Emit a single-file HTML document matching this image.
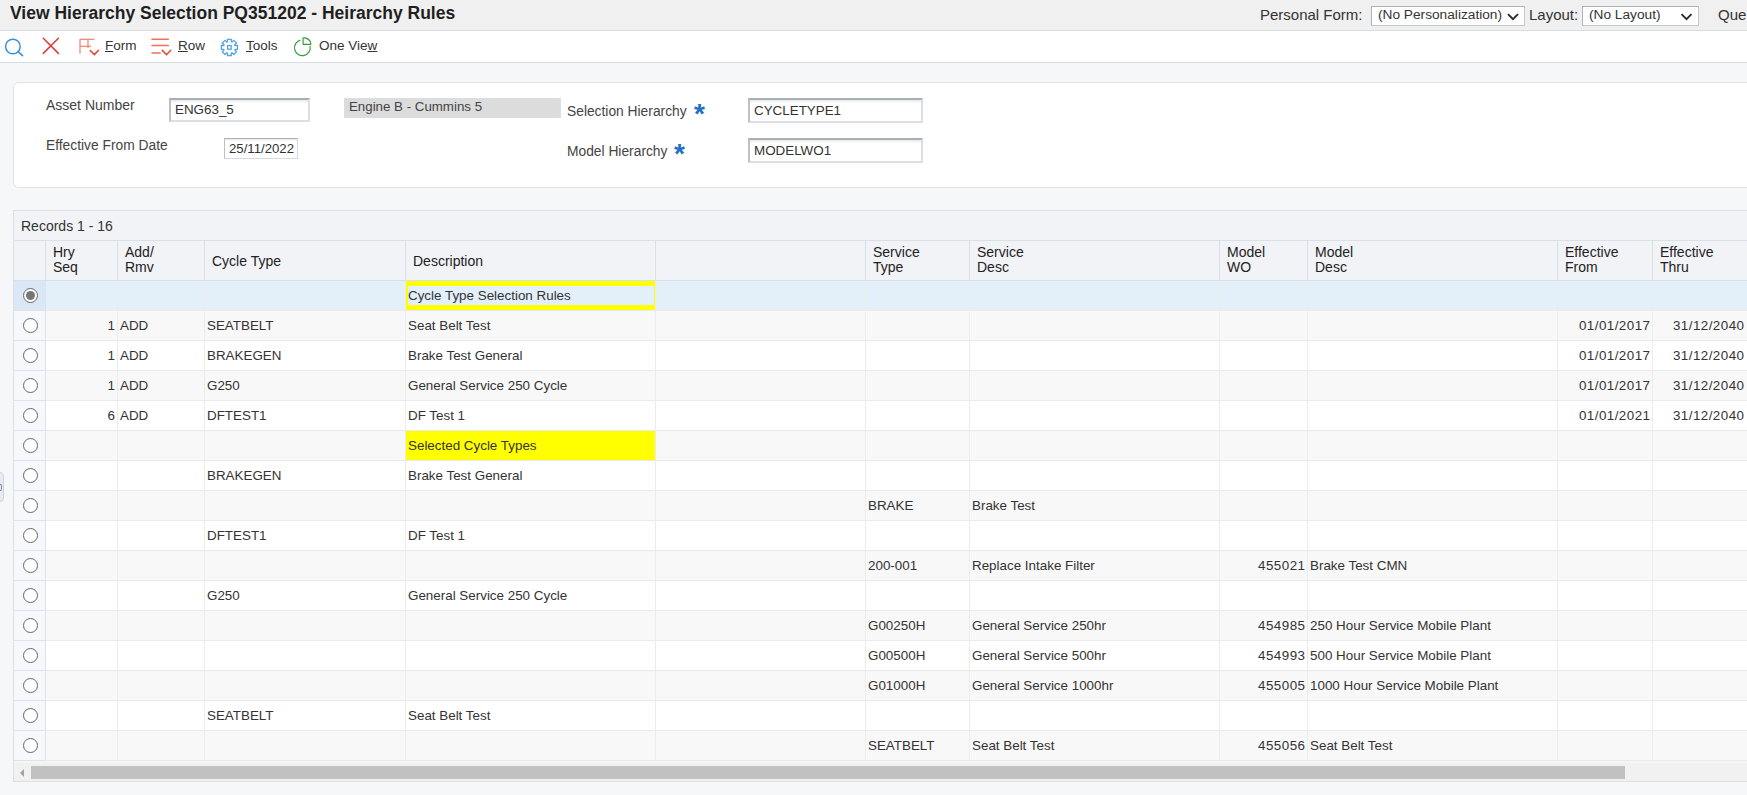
<!DOCTYPE html>
<html><head><meta charset="utf-8">
<style>
*{box-sizing:border-box;margin:0;padding:0}
html,body{width:1747px;height:795px;overflow:hidden;background:#f6f7f9;font-family:"Liberation Sans",sans-serif;color:#333;position:relative}
.a{position:absolute;white-space:nowrap}
#hdr{position:absolute;left:0;top:0;width:1747px;height:31px;background:#f0f0f0;border-bottom:1px solid #d8dde2}
#title{left:10px;top:3px;font-size:17.5px;font-weight:bold;color:#1f1f1f;line-height:20px}
.hlab{top:5px;font-size:15px;color:#333;line-height:20px}
.sel{top:6px;height:20px;background:#fff;border:1px solid #c3c8ce;border-top-color:#a9b0b8;border-left-color:#b0b6bd;font-size:13.7px;color:#333;padding-left:6px;line-height:16px}
.chev{position:absolute;top:8px;width:7px;height:7px;border-right:2px solid #333;border-bottom:2px solid #333;transform:rotate(45deg)}
#tb{position:absolute;left:0;top:31px;width:1747px;height:32px;background:#fff;border-bottom:1px solid #d8dde2}
.tl{top:7px;font-size:13.5px;color:#333;line-height:15px}
.u{text-decoration:underline;text-underline-offset:1px}
#form{position:absolute;left:13px;top:82px;width:1760px;height:106px;background:#fff;border:1px solid #dfe3e8;border-radius:6px}
.flab{font-size:14px;color:#444;line-height:16px}
.inp{background:#fff;border:2px solid #dcdfe5;border-top-color:#a9afb7;border-left-color:#bcc1c7;font-size:13.4px;color:#333;padding-left:4px;box-shadow:inset 0 3px 3px -2px rgba(120,130,140,.25)}
.ast{color:#1f6fc4;font-size:28px;font-weight:bold;line-height:23px}
#grid{position:absolute;left:13px;top:210px;width:1760px;height:572px;background:#f2f3f7;border:1px solid #d9e0e7}
.vl{width:1px;background:#d9e0e7}
.th1{font-size:14px;color:#222;line-height:16px}
.th2{font-size:14px;color:#222;line-height:15px}
.td{font-size:13.4px;color:#333;line-height:15px}
.radio{width:15px;height:15px;border:1.4px solid #666;border-radius:50%;background:#fff}
.radio.on::after{content:"";position:absolute;left:1.6px;top:1.6px;width:9px;height:9px;border-radius:50%;background:#777}
</style></head><body>
<div id="hdr">
  <div class="a" id="title">View Hierarchy Selection PQ351202 - Heirarchy Rules</div>
  <div class="a hlab" style="left:1260px">Personal Form:</div>
  <div class="a sel" style="left:1371px;width:154px">(No Personalization)</div>
  <div class="a hlab" style="left:1529px">Layout:</div>
  <div class="a sel" style="left:1582px;width:117px">(No Layout)</div>
  <div class="a hlab" style="left:1718px">Que</div>
</div>
<div id="tb">
  <div class="a tl" style="left:105px"><span class="u">F</span>orm</div>
  <div class="a tl" style="left:178px"><span class="u">R</span>ow</div>
  <div class="a tl" style="left:246px"><span class="u">T</span>ools</div>
  <div class="a tl" style="left:319px">One Vie<span class="u">w</span></div>
</div>
<div id="form"></div>
<div class="a flab" style="left:46px;top:97px">Asset Number</div>
<div class="a inp" style="left:169px;top:98px;width:141px;height:24px;line-height:20px">ENG63_5</div>
<div class="a" style="left:344px;top:98px;width:217px;height:20px;background:#dcdcdc;border:1px solid #d8dfe8;font-size:13.3px;color:#444;padding-left:4px;line-height:16px">Engine B - Cummins 5</div>
<div class="a flab" style="left:46px;top:138px;font-size:13.8px">Effective From Date</div>
<div class="a" style="left:224px;top:138px;width:74px;height:21px;background:#fff;border:1px solid #d6dae0;border-top-color:#a9afb7;border-left-color:#bcc1c7;box-shadow:inset 0 2px 2px -1px rgba(120,130,140,.2);font-size:13.2px;color:#333;padding-left:4px;line-height:19px">25/11/2022</div>
<div class="a flab" style="left:567px;top:104px;font-size:13.8px">Selection Hierarchy</div>
<div class="a ast" style="left:694px;top:102px">*</div>
<div class="a inp" style="left:748px;top:98px;width:175px;height:25px;line-height:21px">CYCLETYPE1</div>
<div class="a flab" style="left:567px;top:144px;font-size:13.8px">Model Hierarchy</div>
<div class="a ast" style="left:674px;top:142px">*</div>
<div class="a inp" style="left:748px;top:138px;width:175px;height:25px;line-height:21px">MODELWO1</div>
<div id="grid"></div>
<div class="a" style="left:21px;top:218px;font-size:14px;color:#333;line-height:16px">Records 1 - 16</div>
<div class="a" style="left:14px;top:240px;width:1740px;height:41px;background:#f2f3f7;border-top:1px solid #d9e0e7;border-bottom:1px solid #d6e0ea"></div>
<div class="a vl" style="left:45px;top:240px;height:40px"></div>
<div class="a vl" style="left:117px;top:240px;height:40px"></div>
<div class="a vl" style="left:204px;top:240px;height:40px"></div>
<div class="a vl" style="left:405px;top:240px;height:40px"></div>
<div class="a vl" style="left:655px;top:240px;height:40px"></div>
<div class="a vl" style="left:865px;top:240px;height:40px"></div>
<div class="a vl" style="left:969px;top:240px;height:40px"></div>
<div class="a vl" style="left:1219px;top:240px;height:40px"></div>
<div class="a vl" style="left:1307px;top:240px;height:40px"></div>
<div class="a vl" style="left:1557px;top:240px;height:40px"></div>
<div class="a vl" style="left:1652px;top:240px;height:40px"></div>
<div class="a th2" style="left:53px;top:245px">Hry<br>Seq</div>
<div class="a th2" style="left:125px;top:245px">Add/<br>Rmv</div>
<div class="a th1" style="left:212px;top:253px">Cycle Type</div>
<div class="a th1" style="left:413px;top:253px">Description</div>
<div class="a th2" style="left:873px;top:245px">Service<br>Type</div>
<div class="a th2" style="left:977px;top:245px">Service<br>Desc</div>
<div class="a th2" style="left:1227px;top:245px">Model<br>WO</div>
<div class="a th2" style="left:1315px;top:245px">Model<br>Desc</div>
<div class="a th2" style="left:1565px;top:245px">Effective<br>From</div>
<div class="a th2" style="left:1660px;top:245px">Effective<br>Thru</div>
<div class="a" style="left:46px;top:281px;width:1710px;height:30px;background:#e3eff9;border-bottom:1px solid #eaeaea"></div>
<div class="a" style="left:14px;top:281px;width:31px;height:30px;background:#dae8f5;border-bottom:1px solid #dbe3eb"></div>
<div class="a radio on" style="left:23px;top:288px"></div>
<div class="a" style="left:406px;top:281px;width:249px;height:29px;border:solid #ffff00;border-width:5px 1px 5px 2px"></div>
<div class="a td" style="left:408px;top:288px">Cycle Type Selection Rules</div>
<div class="a" style="left:46px;top:311px;width:1710px;height:30px;background:#f8f8f8;border-bottom:1px solid #eaeaea"></div>
<div class="a" style="left:14px;top:311px;width:31px;height:30px;background:#f6f8fc;border-bottom:1px solid #dbe3eb"></div>
<div class="a radio" style="left:23px;top:318px"></div>
<div class="a td" style="right:1632px;top:318px">1</div>
<div class="a td" style="left:120px;top:318px">ADD</div>
<div class="a td" style="left:207px;top:318px">SEATBELT</div>
<div class="a td" style="left:408px;top:318px">Seat Belt Test</div>
<div class="a td" style="right:96.55px;top:318px;letter-spacing:0.45px">01/01/2017</div>
<div class="a td" style="right:2.55px;top:318px;letter-spacing:0.45px">31/12/2040</div>
<div class="a" style="left:46px;top:341px;width:1710px;height:30px;background:#ffffff;border-bottom:1px solid #eaeaea"></div>
<div class="a" style="left:14px;top:341px;width:31px;height:30px;background:#f6f8fc;border-bottom:1px solid #dbe3eb"></div>
<div class="a radio" style="left:23px;top:348px"></div>
<div class="a td" style="right:1632px;top:348px">1</div>
<div class="a td" style="left:120px;top:348px">ADD</div>
<div class="a td" style="left:207px;top:348px">BRAKEGEN</div>
<div class="a td" style="left:408px;top:348px">Brake Test General</div>
<div class="a td" style="right:96.55px;top:348px;letter-spacing:0.45px">01/01/2017</div>
<div class="a td" style="right:2.55px;top:348px;letter-spacing:0.45px">31/12/2040</div>
<div class="a" style="left:46px;top:371px;width:1710px;height:30px;background:#f8f8f8;border-bottom:1px solid #eaeaea"></div>
<div class="a" style="left:14px;top:371px;width:31px;height:30px;background:#f6f8fc;border-bottom:1px solid #dbe3eb"></div>
<div class="a radio" style="left:23px;top:378px"></div>
<div class="a td" style="right:1632px;top:378px">1</div>
<div class="a td" style="left:120px;top:378px">ADD</div>
<div class="a td" style="left:207px;top:378px">G250</div>
<div class="a td" style="left:408px;top:378px">General Service 250 Cycle</div>
<div class="a td" style="right:96.55px;top:378px;letter-spacing:0.45px">01/01/2017</div>
<div class="a td" style="right:2.55px;top:378px;letter-spacing:0.45px">31/12/2040</div>
<div class="a" style="left:46px;top:401px;width:1710px;height:30px;background:#ffffff;border-bottom:1px solid #eaeaea"></div>
<div class="a" style="left:14px;top:401px;width:31px;height:30px;background:#f6f8fc;border-bottom:1px solid #dbe3eb"></div>
<div class="a radio" style="left:23px;top:408px"></div>
<div class="a td" style="right:1632px;top:408px">6</div>
<div class="a td" style="left:120px;top:408px">ADD</div>
<div class="a td" style="left:207px;top:408px">DFTEST1</div>
<div class="a td" style="left:408px;top:408px">DF Test 1</div>
<div class="a td" style="right:96.55px;top:408px;letter-spacing:0.45px">01/01/2021</div>
<div class="a td" style="right:2.55px;top:408px;letter-spacing:0.45px">31/12/2040</div>
<div class="a" style="left:46px;top:431px;width:1710px;height:30px;background:#f8f8f8;border-bottom:1px solid #eaeaea"></div>
<div class="a" style="left:14px;top:431px;width:31px;height:30px;background:#f6f8fc;border-bottom:1px solid #dbe3eb"></div>
<div class="a radio" style="left:23px;top:438px"></div>
<div class="a" style="left:406px;top:431px;width:249px;height:29px;background:#ffff00"></div>
<div class="a td" style="left:408px;top:438px">Selected Cycle Types</div>
<div class="a" style="left:46px;top:461px;width:1710px;height:30px;background:#ffffff;border-bottom:1px solid #eaeaea"></div>
<div class="a" style="left:14px;top:461px;width:31px;height:30px;background:#f6f8fc;border-bottom:1px solid #dbe3eb"></div>
<div class="a radio" style="left:23px;top:468px"></div>
<div class="a td" style="left:207px;top:468px">BRAKEGEN</div>
<div class="a td" style="left:408px;top:468px">Brake Test General</div>
<div class="a" style="left:46px;top:491px;width:1710px;height:30px;background:#f8f8f8;border-bottom:1px solid #eaeaea"></div>
<div class="a" style="left:14px;top:491px;width:31px;height:30px;background:#f6f8fc;border-bottom:1px solid #dbe3eb"></div>
<div class="a radio" style="left:23px;top:498px"></div>
<div class="a td" style="left:868px;top:498px">BRAKE</div>
<div class="a td" style="left:972px;top:498px">Brake Test</div>
<div class="a" style="left:46px;top:521px;width:1710px;height:30px;background:#ffffff;border-bottom:1px solid #eaeaea"></div>
<div class="a" style="left:14px;top:521px;width:31px;height:30px;background:#f6f8fc;border-bottom:1px solid #dbe3eb"></div>
<div class="a radio" style="left:23px;top:528px"></div>
<div class="a td" style="left:207px;top:528px">DFTEST1</div>
<div class="a td" style="left:408px;top:528px">DF Test 1</div>
<div class="a" style="left:46px;top:551px;width:1710px;height:30px;background:#f8f8f8;border-bottom:1px solid #eaeaea"></div>
<div class="a" style="left:14px;top:551px;width:31px;height:30px;background:#f6f8fc;border-bottom:1px solid #dbe3eb"></div>
<div class="a radio" style="left:23px;top:558px"></div>
<div class="a td" style="left:868px;top:558px">200-001</div>
<div class="a td" style="left:972px;top:558px">Replace Intake Filter</div>
<div class="a td" style="right:441.55px;top:558px;letter-spacing:0.45px">455021</div>
<div class="a td" style="left:1310px;top:558px">Brake Test CMN</div>
<div class="a" style="left:46px;top:581px;width:1710px;height:30px;background:#ffffff;border-bottom:1px solid #eaeaea"></div>
<div class="a" style="left:14px;top:581px;width:31px;height:30px;background:#f6f8fc;border-bottom:1px solid #dbe3eb"></div>
<div class="a radio" style="left:23px;top:588px"></div>
<div class="a td" style="left:207px;top:588px">G250</div>
<div class="a td" style="left:408px;top:588px">General Service 250 Cycle</div>
<div class="a" style="left:46px;top:611px;width:1710px;height:30px;background:#f8f8f8;border-bottom:1px solid #eaeaea"></div>
<div class="a" style="left:14px;top:611px;width:31px;height:30px;background:#f6f8fc;border-bottom:1px solid #dbe3eb"></div>
<div class="a radio" style="left:23px;top:618px"></div>
<div class="a td" style="left:868px;top:618px">G00250H</div>
<div class="a td" style="left:972px;top:618px">General Service 250hr</div>
<div class="a td" style="right:441.55px;top:618px;letter-spacing:0.45px">454985</div>
<div class="a td" style="left:1310px;top:618px">250 Hour Service Mobile Plant</div>
<div class="a" style="left:46px;top:641px;width:1710px;height:30px;background:#ffffff;border-bottom:1px solid #eaeaea"></div>
<div class="a" style="left:14px;top:641px;width:31px;height:30px;background:#f6f8fc;border-bottom:1px solid #dbe3eb"></div>
<div class="a radio" style="left:23px;top:648px"></div>
<div class="a td" style="left:868px;top:648px">G00500H</div>
<div class="a td" style="left:972px;top:648px">General Service 500hr</div>
<div class="a td" style="right:441.55px;top:648px;letter-spacing:0.45px">454993</div>
<div class="a td" style="left:1310px;top:648px">500 Hour Service Mobile Plant</div>
<div class="a" style="left:46px;top:671px;width:1710px;height:30px;background:#f8f8f8;border-bottom:1px solid #eaeaea"></div>
<div class="a" style="left:14px;top:671px;width:31px;height:30px;background:#f6f8fc;border-bottom:1px solid #dbe3eb"></div>
<div class="a radio" style="left:23px;top:678px"></div>
<div class="a td" style="left:868px;top:678px">G01000H</div>
<div class="a td" style="left:972px;top:678px">General Service 1000hr</div>
<div class="a td" style="right:441.55px;top:678px;letter-spacing:0.45px">455005</div>
<div class="a td" style="left:1310px;top:678px">1000 Hour Service Mobile Plant</div>
<div class="a" style="left:46px;top:701px;width:1710px;height:30px;background:#ffffff;border-bottom:1px solid #eaeaea"></div>
<div class="a" style="left:14px;top:701px;width:31px;height:30px;background:#f6f8fc;border-bottom:1px solid #dbe3eb"></div>
<div class="a radio" style="left:23px;top:708px"></div>
<div class="a td" style="left:207px;top:708px">SEATBELT</div>
<div class="a td" style="left:408px;top:708px">Seat Belt Test</div>
<div class="a" style="left:46px;top:731px;width:1710px;height:30px;background:#f8f8f8;border-bottom:1px solid #eaeaea"></div>
<div class="a" style="left:14px;top:731px;width:31px;height:30px;background:#f6f8fc;border-bottom:1px solid #dbe3eb"></div>
<div class="a radio" style="left:23px;top:738px"></div>
<div class="a td" style="left:868px;top:738px">SEATBELT</div>
<div class="a td" style="left:972px;top:738px">Seat Belt Test</div>
<div class="a td" style="right:441.55px;top:738px;letter-spacing:0.45px">455056</div>
<div class="a td" style="left:1310px;top:738px">Seat Belt Test</div>
<div class="a" style="left:117px;top:281px;width:1px;height:480px;background:#ececec"></div>
<div class="a" style="left:204px;top:281px;width:1px;height:480px;background:#ececec"></div>
<div class="a" style="left:405px;top:281px;width:1px;height:480px;background:#ececec"></div>
<div class="a" style="left:655px;top:281px;width:1px;height:480px;background:#ececec"></div>
<div class="a" style="left:865px;top:281px;width:1px;height:480px;background:#ececec"></div>
<div class="a" style="left:969px;top:281px;width:1px;height:480px;background:#ececec"></div>
<div class="a" style="left:1219px;top:281px;width:1px;height:480px;background:#ececec"></div>
<div class="a" style="left:1307px;top:281px;width:1px;height:480px;background:#ececec"></div>
<div class="a" style="left:1557px;top:281px;width:1px;height:480px;background:#ececec"></div>
<div class="a" style="left:1652px;top:281px;width:1px;height:480px;background:#ececec"></div>
<div class="a" style="left:45px;top:281px;width:1px;height:480px;background:#dbe3eb"></div>
<div class="a" style="left:14px;top:761px;width:1740px;height:20px;background:#f1f1f1;border-top:2px solid #f5f5f7"></div>
<div class="a" style="left:31px;top:766px;width:1594px;height:13px;background:#c1c1c1"></div>
<div class="a" style="left:20px;top:768.5px;width:0;height:0;border-top:4px solid transparent;border-bottom:4px solid transparent;border-right:4.5px solid #a3a3a3"></div>
<div class="a" style="left:-2px;top:472px;width:6px;height:30px;background:#e8ecf2;border:1px solid #cdd5de;border-radius:0 4px 4px 0"></div><div class="a" style="left:-1px;top:484px;width:3px;height:7px;border-radius:50%;border:1.2px solid #8a8a8a;border-left:none"></div>
<svg class="a" style="left:0;top:0" width="1747" height="30"><g fill="none" stroke="#2a2a2a" stroke-width="1.9"><polyline points="1508,14.2 1513,19.2 1518,14.2"/><polyline points="1681.5,14.2 1686.5,19.2 1691.5,14.2"/></g></svg>
<!--ICONS-->
<svg class="a" style="left:0;top:31px" width="400" height="31" viewBox="0 0 400 31">
  <g fill="none" stroke-linecap="round">
    <circle cx="12.9" cy="15.5" r="7.3" stroke="#3a8fd9" stroke-width="1.5"/>
    <line x1="18.2" y1="20.8" x2="22.6" y2="24.6" stroke="#3a8fd9" stroke-width="1.6"/>
    <line x1="43.3" y1="7.3" x2="58.4" y2="22.4" stroke="#dc3c3c" stroke-width="1.5"/>
    <line x1="58.4" y1="7.3" x2="43.3" y2="22.4" stroke="#dc3c3c" stroke-width="1.5"/>
    <g stroke="#f08a7a" stroke-width="1.3" stroke-linecap="butt">
      <line x1="80" y1="8" x2="80" y2="22.5"/>
      <line x1="80" y1="8.3" x2="94.5" y2="8.3"/>
      <line x1="80" y1="15.3" x2="91" y2="15.3"/>
      <line x1="88" y1="8" x2="88" y2="17"/>
    </g>
    <polyline points="90.3,19.5 94.4,23.6 98.6,19.3" stroke="#e8482f" stroke-width="1.6"/>
    <g stroke="#f0705c" stroke-width="1.5">
      <line x1="152" y1="8.3" x2="168.3" y2="8.3"/>
      <line x1="152" y1="14.6" x2="168.3" y2="14.6"/>
      <line x1="152" y1="22" x2="160.2" y2="22"/>
    </g>
    <polyline points="162.3,19.4 166.5,23.7 170.7,19.3" stroke="#e8482f" stroke-width="1.6"/>
    <path d="M227.50,10.71 L227.50,8.32 L231.30,8.32 L231.30,10.71 L232.08,11.03 L233.77,9.34 L236.46,12.03 L234.77,13.72 L235.09,14.50 L237.48,14.50 L237.48,18.30 L235.09,18.30 L234.77,19.08 L236.46,20.77 L233.77,23.46 L232.08,21.77 L231.30,22.09 L231.30,24.48 L227.50,24.48 L227.50,22.09 L226.72,21.77 L225.03,23.46 L222.34,20.77 L224.03,19.08 L223.71,18.30 L221.32,18.30 L221.32,14.50 L223.71,14.50 L224.03,13.72 L222.34,12.03 L225.03,9.34 L226.72,11.03 Z" stroke="#5ba3e0" stroke-width="1.3" stroke-linejoin="miter"/>
    <rect x="227.6" y="14.6" width="3.6" height="3.6" stroke="#5ba3e0" stroke-width="1.3"/>
    <path d="M300.41,9.06 A7.9,7.9 0 1 0 310.11,14.99" stroke="#3c9a3c" stroke-width="1.2" stroke-linecap="butt"/>
    <path d="M303.1,6.8 L305.2,6.8 Q310.6,8.3 310.9,13.3 L303.1,13.3 Z" stroke="#3c9a3c" stroke-width="1.2" stroke-linejoin="round"/>
  </g>
</svg>
</body></html>
